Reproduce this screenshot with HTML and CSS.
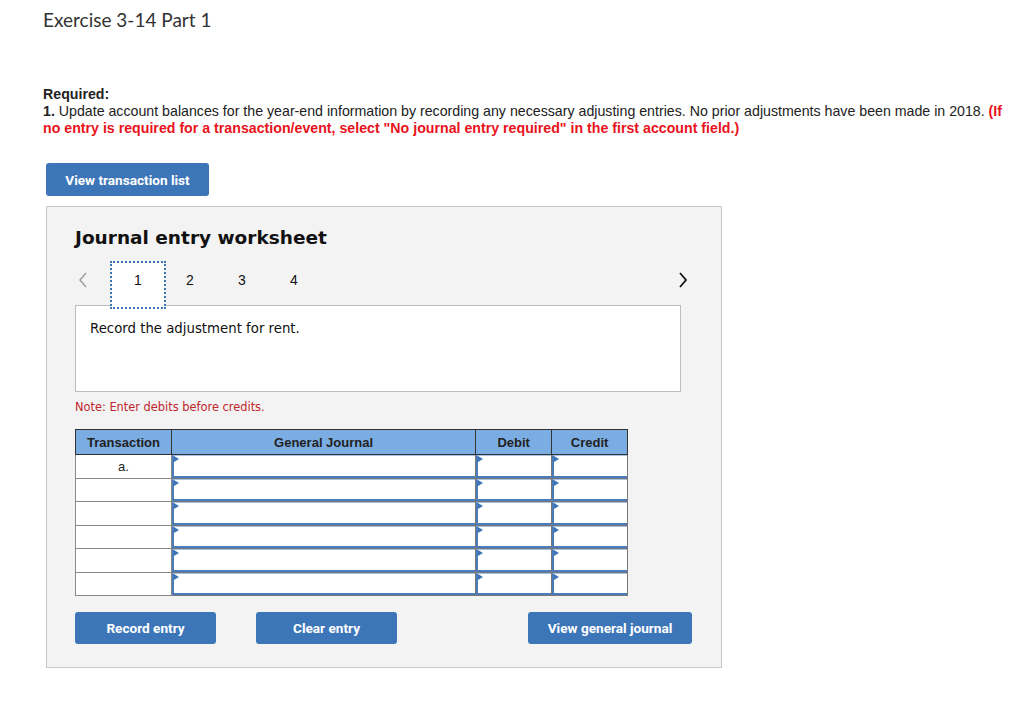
FILE: index.html
```html
<!DOCTYPE html>
<html lang="en">
<head>
    <meta charset="UTF-8">
    <meta name="viewport" content="width=device-width, initial-scale=1.0">
    <title>Exercise 3-14 Part 1</title>
    <link rel="stylesheet" href="styles.css">
</head>
<body>
    <div class="page">
        <h1 class="title">Exercise 3-14 Part 1</h1>

        <div class="required">
            <div><strong>Required:</strong></div>
            <div><strong>1.</strong> Update account balances for the year-end information by recording any necessary adjusting entries. No prior adjustments have been made in 2018. <span class="red">(If</span><br>
            <span class="red">no entry is required for a transaction/event, select "No journal entry required" in the first account field.)</span></div>
        </div>

        <button type="button" class="btn btn-list">View transaction list</button>

        <div class="worksheet">
            <h2>Journal entry worksheet</h2>

            <div class="pager">
                <span class="arrow prev">
                    <svg width="10" height="16" viewBox="0 0 10 16"><path d="M8 1 L2 8 L8 15" fill="none" stroke="#9a9a9a" stroke-width="1.4"/></svg>
                </span>
                <span class="tab active">1</span>
                <span class="tab">2</span>
                <span class="tab">3</span>
                <span class="tab">4</span>
                <span class="arrow next">
                    <svg width="10" height="16" viewBox="0 0 10 16"><path d="M2 1 L8 8 L2 15" fill="none" stroke="#111" stroke-width="1.8"/></svg>
                </span>
            </div>

            <div class="task">Record the adjustment for rent.</div>

            <div class="note">Note: Enter debits before credits.</div>

            <table class="journal">
                <tr>
                    <th class="col-tr">Transaction</th>
                    <th class="col-gj">General Journal</th>
                    <th class="col-dr">Debit</th>
                    <th class="col-cr">Credit</th>
                </tr>
                <tr>
                    <td class="trans">a.</td>
                    <td><div class="field"></div></td>
                    <td><div class="field"></div></td>
                    <td><div class="field"></div></td>
                </tr>
                <tr>
                    <td class="trans"></td>
                    <td><div class="field"></div></td>
                    <td><div class="field"></div></td>
                    <td><div class="field"></div></td>
                </tr>
                <tr>
                    <td class="trans"></td>
                    <td><div class="field"></div></td>
                    <td><div class="field"></div></td>
                    <td><div class="field"></div></td>
                </tr>
                <tr>
                    <td class="trans"></td>
                    <td><div class="field"></div></td>
                    <td><div class="field"></div></td>
                    <td><div class="field"></div></td>
                </tr>
                <tr>
                    <td class="trans"></td>
                    <td><div class="field"></div></td>
                    <td><div class="field"></div></td>
                    <td><div class="field"></div></td>
                </tr>
                <tr>
                    <td class="trans"></td>
                    <td><div class="field"></div></td>
                    <td><div class="field"></div></td>
                    <td><div class="field"></div></td>
                </tr>
            </table>

            <div class="actions">
                <div class="actions-left">
                    <button type="button" class="btn btn-wide">Record entry</button>
                    <button type="button" class="btn btn-wide">Clear entry</button>
                </div>
                <button type="button" class="btn btn-journal">View general journal</button>
            </div>
        </div>
    </div>
</body>
</html>
```

FILE: styles.css
```css
body {
    margin: 0;
    padding: 0;
    background-color: #fff;
    color: #222;
    font-family: "Liberation Sans", Arial, sans-serif;
}
.page {
    padding: 9px 14px 30px 43px;
}
.title {
    margin: 0;
    font-family: Lato, "Open Sans", sans-serif;
    font-size: 19px;
    font-weight: normal;
    line-height: 22px;
    color: #333;
}
.required {
    margin-top: 55px;
    font-size: 14.2px;
    line-height: 17px;
    color: #222;
}
.red {
    color: #e8131c;
    font-weight: bold;
}
.btn {
    background-color: #3d76b8;
    color: #fff;
    border: none;
    border-radius: 3px;
    font-family: Roboto, "Liberation Sans", sans-serif;
    font-size: 13.6px;
    font-weight: bold;
    cursor: pointer;
    padding: 0;
}
.btn:hover {
    background-color: #2f5f98;
}
.btn-list {
    display: block;
    margin: 26px 0 0 3px;
    width: 163px;
    height: 33px;
}
.worksheet {
    margin: 10px 0 0 3px;
    width: 646px;
    height: 441px;
    padding: 19px 0 0 28px;
    background: #f3f3f3;
    border: 1px solid #c8c8c8;
}
.worksheet h2 {
    margin: 0;
    font-family: "DejaVu Sans", Verdana, sans-serif;
    font-size: 18.5px;
    line-height: 24px;
    color: #111;
}
.pager {
    display: flex;
    align-items: flex-start;
    margin-top: 13px;
    height: 42px;
    width: 617px;
    font-family: "Liberation Sans", Arial, sans-serif;
    font-size: 14px;
    color: #111;
}
.arrow {
    display: flex;
    margin-top: 9px;
}
.prev {
    width: 37px;
    padding-left: 3px;
    box-sizing: border-box;
}
.next {
    margin-left: auto;
    margin-right: 4px;
}
.tab {
    width: 52px;
    height: 42px;
    line-height: 34px;
    text-align: center;
}
.tab.active {
    background: #fff;
    outline: 2px dotted #3d76b8;
    height: 44px;
    margin-bottom: -2px;
    position: relative;
    z-index: 1;
}
.task {
    width: 590px;
    height: 70px;
    padding: 15px 0 0 14px;
    background: #fff;
    border: 1px solid #bdbdbd;
    font-family: "DejaVu Sans", Verdana, sans-serif;
    font-size: 13.3px;
    line-height: 16px;
    color: #111;
}
.note {
    margin-top: 8px;
    font-family: "DejaVu Sans", Verdana, sans-serif;
    font-size: 11.4px;
    line-height: 15px;
    color: #c0272d;
}
.journal {
    margin-top: 14px;
    border-collapse: collapse;
    width: 553px;
    font-size: 13px;
}
.journal th {
    background: #7badE3;
    border: 1px solid #333;
    height: 24px;
    padding: 0;
    font-weight: bold;
    color: #222;
}
.col-tr { width: 95px; }
.col-gj { width: 304px; }
.col-dr { width: 75px; }
.col-cr { width: 75px; }
.journal td {
    border: 1px solid #777;
    background: #fff;
    height: 22.5px;
    padding: 0;
}
.journal td.trans {
    text-align: center;
    border-color: #888;
    color: #222;
}
.field {
    position: relative;
    height: 19.5px;
    border-left: 2px solid #4a7cbc;
    border-bottom: 2px solid #4a7cbc;
    border-top: 1px solid #a9c1e0;
}
.field::before {
    content: "";
    position: absolute;
    left: 0;
    top: 0;
    border-top: 3px solid transparent;
    border-bottom: 3px solid transparent;
    border-left: 5px solid #3d76b8;
}
.actions {
    display: flex;
    justify-content: space-between;
    margin-top: 16px;
    width: 617px;
}
.actions-left {
    display: flex;
    gap: 40px;
}
.btn-wide {
    width: 141px;
    height: 32px;
}
.btn-journal {
    width: 164px;
    height: 32px;
}
```
